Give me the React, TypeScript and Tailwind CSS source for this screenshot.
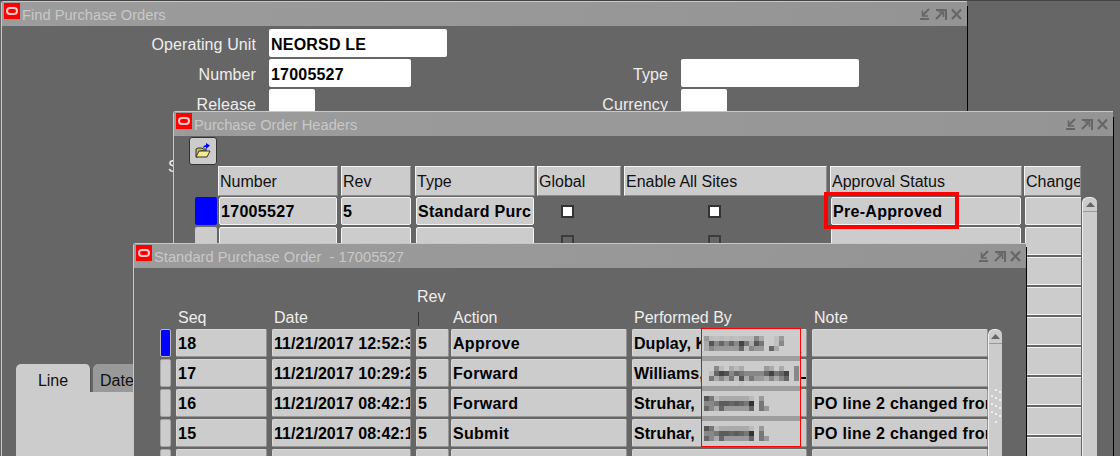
import React from "react";

const FONT = "font-['Liberation_Sans',Arial,sans-serif]";

function OracleLogo() {
  return (
    <svg width="16" height="16" viewBox="0 0 16 16" className="shrink-0">
      <rect width="16" height="16" fill="#ff0000" />
      <rect x="3" y="5" width="10" height="6" rx="3" fill="none" stroke="#ffc8c8" strokeWidth="2" />
    </svg>
  );
}

function WinButtons() {
  return (
    <svg width="44" height="12" viewBox="0 0 44 12" className="shrink-0 mt-[6px]" fill="none" stroke="#666666" strokeWidth="2">
      <path d="M0 11h9" />
      <path d="M9 1L3 7" />
      <path d="M2.5 2.5V8H8" strokeWidth="1.6" />
      <path d="M16 2h10v10" />
      <path d="M16 11l7-7" />
      <path d="M18.5 4H23.5V9" strokeWidth="1.6" />
      <path d="M32 1.5l9 9.5M41 1.5L32 11" strokeWidth="2.2" />
    </svg>
  );
}

function Window({ className, title, children }: { className: string; title: string; children?: React.ReactNode }) {
  return (
    <div className={`absolute flex flex-col bg-[#666666] border-t border-l border-[#c8c8c8] rounded-tl-[3px] ${className}`}>
      <div className="h-[24px] shrink-0 flex items-start justify-between pl-[2px] pr-[3px] bg-gradient-to-r from-[#9c9c9c] to-[#949494]">
        <div className="flex items-start gap-[2px] pt-[1px]">
          <OracleLogo />
          <span className="text-[14.7px] leading-[20px] pt-[2px] text-[#c8c8c8] whitespace-pre">{title}</span>
        </div>
        <WinButtons />
      </div>
      {children}
    </div>
  );
}

function Cell({ className = "", dim, tight, children }: { className?: string; dim?: boolean; tight?: boolean; children?: React.ReactNode }) {
  const edge = dim
    ? "border-[#d8d8d8] border-b-[#969696] border-r-[#969696]"
    : "border-[#f4f4f4]";
  const track = tight ? "tracking-[0.05px]" : "tracking-[0.3px]";
  return (
    <div className={`h-[28px] bg-[#cccccc] rounded-[2px] border ${edge} ${track} flex items-center pl-[1px] pt-[2px] overflow-hidden whitespace-nowrap text-[16px] font-bold text-black ${className}`}>
      {children}
    </div>
  );
}

function HeaderCell({ className = "", children }: { className?: string; children?: React.ReactNode }) {
  return (
    <div className={`h-[30px] bg-[#cccccc] border border-[#f4f4f4] border-b-[#8c8c8c] border-r-[#8c8c8c] flex items-center pl-[1px] pt-[2px] overflow-hidden whitespace-nowrap text-[16px] text-[#111] ${className}`}>
      {children}
    </div>
  );
}

function Check({ faded }: { faded?: boolean }) {
  return <div className={`w-[13px] h-[13px] border-2 ${faded ? "border-[#3c3c3c]" : "bg-white border-[#333]"}`} />;
}

function Field({ w, children }: { w: string; children?: React.ReactNode }) {
  return (
    <div className={`h-[28px] bg-white rounded-[2px] flex items-center pl-[2px] pt-[3px] text-[16px] font-bold tracking-[0.2px] text-black whitespace-nowrap ${w}`}>
      {children}
    </div>
  );
}

function Label({ w, children }: { w: string; children: React.ReactNode }) {
  return <div className={`text-right pt-[3px] text-[16px] tracking-[0.1px] text-[#eeeeee] whitespace-nowrap ${w}`}>{children}</div>;
}

function Scrollbar({ className, grip }: { className: string; grip?: boolean }) {
  return (
    <div className={`flex flex-col bg-[#cccccc] rounded-t-[6px] border-t border-l border-[#eeeeee] ${className}`}>
      <div className="h-[14px] shrink-0 flex items-center justify-center border-b border-[#999]">
        <svg width="9" height="6" viewBox="0 0 9 6"><path d="M4.5 0L9 5H0z" fill="#666" /></svg>
      </div>
      {grip && (
        <div className="mt-[45px] ml-[1px]">
          <svg width="11" height="36" viewBox="0 0 11 36" fill="#eee">
            <rect x="5" y="0" width="2" height="2" /><rect x="9" y="2" width="2" height="2" />
            <rect x="1" y="6" width="2" height="2" /><rect x="5" y="8" width="2" height="2" /><rect x="9" y="10" width="2" height="2" />
            <rect x="1" y="14" width="2" height="2" /><rect x="5" y="16" width="2" height="2" /><rect x="9" y="18" width="2" height="2" />
            <rect x="1" y="22" width="2" height="2" /><rect x="5" y="24" width="2" height="2" /><rect x="9" y="26" width="2" height="2" />
            <rect x="5" y="32" width="2" height="2" />
          </svg>
        </div>
      )}
    </div>
  );
}

const _ = "";
const nameA: string[][] = [
  ["#999", "#bbb", "#c0c0c0", "#bbb", "#c0c0c0", "#bbb", "#c0c0c0", "#bbb", "#bbb", "#bbb", "#888", "#aaa", _, _, "#c0c0c0", "#999"],
  ["#aaa", "#555", "#888", "#666", "#888", "#666", "#888", "#444", "#777", "#aaa", "#555", "#777", _, _, "#c0c0c0", "#888"],
  ["#aaa", "#888", "#999", "#999", "#999", "#999", "#999", "#666", "#bbb", "#888", "#999", "#999", _, "#666", "#aaa", _],
];
const nameB: string[][] = [
  [_, _, "#888", "#bbb", _, "#aaa", "#bbb", "#aaa", _, _, _, _, "#999", "#aaa", _, "#aaa", _, _, "#888"],
  [_, "#bbb", "#666", "#444", "#555", "#888", "#666", "#777", "#888", "#888", "#888", "#888", "#666", "#444", "#777", "#666", "#444", _, "#888"],
  [_, "#777", "#aaa", "#888", "#aaa", "#777", "#bbb", "#555", "#aaa", "#777", "#999", "#999", "#aaa", "#888", "#aaa", "#888", "#666", _, "#888"],
  [_, _, _, _, _, _, _, "#c4c4c4", _, _, _, _, _, _, _, _, _, _, _],
];
const nameC: string[][] = [
  ["#555", "#777", "#bbb", "#aaa", "#aaa", "#aaa", "#aaa", "#aaa", "#aaa", "#bbb", _, "#999", _],
  ["#888", "#888", "#777", "#5c5c5c", "#5c5c5c", "#666", "#5c5c5c", "#666", "#777", "#333", _, "#777", _],
  ["#666", "#888", "#aaa", "#666", "#999", "#999", "#999", "#999", "#999", "#666", _, "#777", "#999"],
];

function Mosaic({ rows }: { rows: string[][] }) {
  return (
    <svg width="100" height={rows.length * 5} viewBox={`0 0 100 ${rows.length * 5}`} className="block shrink-0">
      {rows.map((row, y) =>
        row.map((c, x) => (c ? <rect key={`${x}-${y}`} x={x * 5} y={y * 5} width="5" height="5" fill={c} /> : null))
      )}
    </svg>
  );
}

const historyRows = [
  { seq: "18", date: "11/21/2017 12:52:3", action: "Approve", by: "Duplay, K", note: "", rev: "5", on: true },
  { seq: "17", date: "11/21/2017 10:29:2", action: "Forward", by: "Williams,", note: "", rev: "5" },
  { seq: "16", date: "11/21/2017 08:42:1", action: "Forward", by: "Struhar,", note: "PO line 2 changed from", rev: "5" },
  { seq: "15", date: "11/21/2017 08:42:1", action: "Submit", by: "Struhar,", note: "PO line 2 changed from", rev: "5" },
  { seq: "", date: "", action: "", by: "", note: "", rev: "" },
];

const COLS = "grid grid-cols-[23px_123px_74px_122px_87px_206px_194px_57px] w-[886px]";

function HeaderRows() {
  return (
    <div className={`${COLS} mt-[1px] gap-y-[2px]`}>
      {Array.from({ length: 9 }).map((_v, i) => (
        <React.Fragment key={i}>
          <div className={`w-[22px] h-[28px] rounded-[2px] ${i === 0 ? "bg-[#0000ff]" : "bg-[#cccccc]"}`} />
          <Cell className="ml-[1px] mr-[4px]">{i === 0 ? "17005527" : ""}</Cell>
          <Cell className="mr-[4px]">{i === 0 ? "5" : ""}</Cell>
          <Cell className="ml-[1px] mr-[3px]">{i === 0 ? "Standard Purc" : ""}</Cell>
          <div className="h-[28px] flex items-center pl-[24px]"><Check faded={i > 0} /></div>
          <div className="h-[28px] flex items-center pl-[84px]"><Check faded={i > 0} /></div>
          <Cell className="ml-[1px] mr-[3px]">{i === 0 ? "Pre-Approved" : ""}</Cell>
          <Cell className="ml-[1px] rounded-r-none border-r-0" />
        </React.Fragment>
      ))}
    </div>
  );
}

export default function App() {
  return (
    <div className={`relative w-[1120px] h-[456px] overflow-hidden bg-[#666666] border-t border-[#444] ${FONT}`}>
      {/* Find Purchase Orders */}
      <Window className="left-[1px] top-[0px] w-[966px] h-[470px]" title="Find Purchase Orders">
        <div className="flex flex-col gap-[2px] pt-[3px] pl-[149px]">
          <div className="flex items-center gap-[13px]">
            <Label w="w-[105px]">Operating Unit</Label>
            <Field w="w-[178px]">NEORSD LE</Field>
          </div>
          <div className="flex items-center gap-[13px]">
            <Label w="w-[105px]">Number</Label>
            <Field w="w-[142px]">17005527</Field>
            <Label w="w-[244px]">Type</Label>
            <Field w="w-[178px]" />
          </div>
          <div className="flex items-center gap-[13px]">
            <Label w="w-[105px]">Release</Label>
            <Field w="w-[46px]" />
            <Label w="w-[340px]">Currency</Label>
            <Field w="w-[46px]" />
          </div>
        </div>
        <div className="absolute left-[166px] top-[153px] text-[16px] text-[#eeeeee]">S</div>
        <div className="absolute left-[14px] top-[362px] flex">
          <div className="w-[75px] h-[100px] bg-[#cccccc] border-r border-[#555] rounded-t-[5px] pt-[5px] text-center text-[16px] text-[#111]">Line</div>
          <div className="ml-[2px] w-[60px] h-[28px] bg-[#999999] rounded-t-[5px] pt-[5px] pl-[7px] text-[16px] text-[#111]">Date</div>
        </div>
        <div className="absolute left-[14px] top-[390px] w-[200px] h-[80px] bg-[#cccccc]" />
      </Window>
      <div className="absolute left-[967px] top-[5px] w-px h-[106px] bg-black" />

      {/* Purchase Order Headers */}
      <Window className="left-[173px] top-[110px] w-[940px] h-[360px]" title="Purchase Order Headers">
        <div className="pl-[15px] pt-[1px]">
          <div className="w-[28px] h-[28px] bg-[#cccccc] border border-[#333] rounded-[3px] flex items-center justify-center">
            <svg width="16" height="16" viewBox="0 0 16 16">
              <path d="M1 14V6l2-1h4l1 1h3v2H5l-2 6z" fill="#c8b850" stroke="#333" strokeWidth="1" />
              <path d="M1 14l3-6h11l-3 6z" fill="#f4ea90" stroke="#333" strokeWidth="1" />
              <path d="M8 5c0-2 2-3 3-3V0l4 2.5L11 6V4C9.500 4 9 4.500 8 5z" fill="#0000ff" />
            </svg>
          </div>
        </div>
        <div className="pl-[21px] mt-[1px] w-[907px] overflow-hidden">
          <div className={COLS}>
            <div />
            <HeaderCell className="mr-[3px]">Number</HeaderCell>
            <HeaderCell className="mr-[4px]">Rev</HeaderCell>
            <HeaderCell className="mr-[2px]">Type</HeaderCell>
            <HeaderCell className="mr-[3px]">Global</HeaderCell>
            <HeaderCell className="mr-[3px]">Enable All Sites</HeaderCell>
            <HeaderCell className="mr-[2px]">Approval Status</HeaderCell>
            <HeaderCell>Change</HeaderCell>
          </div>
          <HeaderRows />
        </div>
        <Scrollbar className="absolute left-[908px] top-[85px] w-[15px] h-[300px]" />
      </Window>
      <div className="absolute left-[1113px] top-[116px] w-px h-[340px] bg-black" />

      {/* Red highlight */}
      <div className="absolute left-[824px] top-[191px] w-[135px] h-[37px] border-[4px] border-[#ff0000]" />

      {/* Standard Purchase Order */}
      <Window className="left-[133px] top-[242px] w-[893px] h-[230px]" title="Standard Purchase Order  - 17005527">
        <div className="pl-[26px]">
          <div className="relative flex text-[16px] leading-[22px] text-[#eeeeee] h-[61px] items-end">
            <div className="absolute left-[257px] bottom-[21px]">Rev</div>
            <div className="w-[18px]" />
            <div className="w-[96px]">Seq</div>
            <div className="w-[143px]">Date</div>
            <div className="w-[36px] relative"><div className="absolute left-[1px] bottom-[3px] w-px h-[14px] bg-[#333]" /></div>
            <div className="w-[181px]">Action</div>
            <div className="w-[180px]">Performed By</div>
            <div>Note</div>
          </div>
          <div className="flex flex-col gap-[2px]">
            {historyRows.map((r, i) => (
              <div key={i} className="flex">
                <div className={`w-[11px] h-[28px] rounded-[2px] border ${r.on ? "bg-[#0000ff] border-[#b8b8b8]" : "bg-[#cccccc] border-[#a8a8a8]"}`} />
                <Cell dim className="ml-[5px] w-[91px]">{r.seq}</Cell>
                <Cell dim tight className="ml-[5px] w-[139px]">{r.date}</Cell>
                <Cell dim className="ml-[5px] w-[33px]">{r.rev}</Cell>
                <Cell dim className="ml-[2px] w-[176px]">{r.action}</Cell>
                <Cell dim tight className="ml-[5px] w-[175px]">{r.by}</Cell>
                <Cell dim className="ml-[5px] w-[176px]">{r.note}</Cell>
              </div>
            ))}
          </div>
        </div>
        <Scrollbar className="absolute left-[854px] top-[85px] w-[14px] h-[150px]" grip />
      </Window>
      <div className="absolute left-[1026px] top-[246px] w-px h-[210px] bg-black" />

      {/* Pixelated names, outlined in red */}
      <div className="absolute left-[801px] top-[376px] w-[5px] h-[2px] bg-black" />
      <div className="absolute left-[701px] top-[327px] w-[100px] h-[119px] border border-[#ff0000] bg-[#cccccc] overflow-hidden pl-[2px] pt-[7px]">
        <Mosaic rows={nameA} />
        <div className="mt-[5px] -ml-[2px] h-[5px] bg-[#9e9e9e]" />
        <div className="mt-[5px]"><Mosaic rows={nameB} /></div>
        <div className="-ml-[2px] h-[5px] bg-[#9e9e9e]" />
        <div className="mt-[5px]"><Mosaic rows={nameC} /></div>
        <div className="mt-[5px] -ml-[2px] h-[5px] bg-[#9e9e9e]" />
        <div className="mt-[5px]"><Mosaic rows={nameC} /></div>
      </div>
    </div>
  );
}
